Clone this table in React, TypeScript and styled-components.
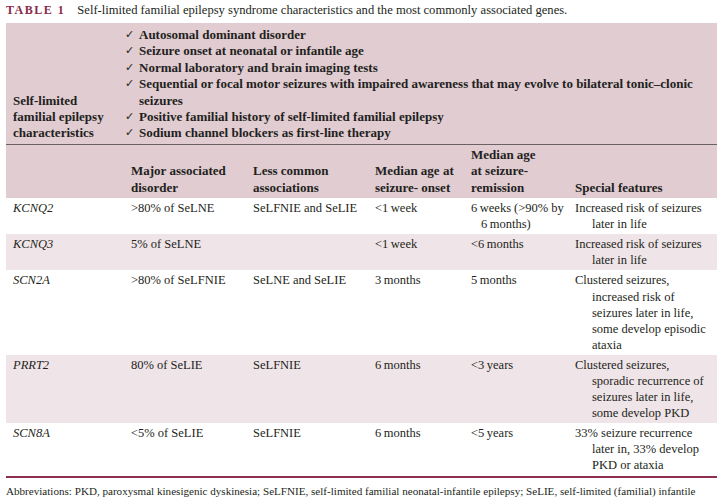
import React from "react";
import styled, { createGlobalStyle } from "styled-components";

const Global = createGlobalStyle`
  html, body { margin: 0; padding: 0; background: #ffffff; }
  body { font-family: "Liberation Serif", "Times New Roman", serif; color: #231f20; }
`;

const Page = styled.div`
  padding: 0 8px 0 6px;
  width: 711px;
`;

const Caption = styled.div`
  display: flex;
  align-items: baseline;
  gap: 12px;
  padding-top: 3px;
  height: 20px;
  font-size: 12.6px;
  line-height: 15px;
`;

const CaptionLabel = styled.span`
  font-weight: bold;
  font-size: 12px;
  letter-spacing: 1.5px;
  color: #8a2a4a;
`;

const Table = styled.table`
  width: 711px;
  border-collapse: collapse;
  table-layout: fixed;
  border-bottom: 2px solid #8d2f4f;
`;

const Col = styled.col<{ $w: number }>`
  width: ${(p) => p.$w}px;
`;

const HeadRow = styled.tr<{ $divider?: boolean }>`
  background: #e0ccd1;
  ${(p) => (p.$divider ? "border-top: 1px solid #6b6163;" : "")}
`;

const Th = styled.th<{ $top?: number; $bottom?: number; $left?: number }>`
  text-align: left;
  vertical-align: bottom;
  font-weight: bold;
  font-size: 13px;
  line-height: 16.4px;
  padding: ${(p) => p.$top ?? 2}px 6px ${(p) => p.$bottom ?? 2}px ${(p) => p.$left ?? 7}px;
  color: #231f20;
`;

const CheckList = styled.ul`
  list-style: none;
  margin: 0;
  padding: 0;
`;

const CheckItem = styled.li`
  display: flex;
  gap: 4px;
`;

const Tick = styled.span`
  flex: none;
  width: 10px;
  font-family: "DejaVu Sans", sans-serif;
  font-weight: bold;
  font-size: 11px;
`;

const BodyRow = styled.tr<{ $shade?: boolean }>`
  background: ${(p) => (p.$shade ? "#efe4e7" : "#ffffff")};
`;

const Td = styled.td<{ $hang?: number }>`
  vertical-align: top;
  font-size: 12.5px;
  line-height: 16.1px;
  padding: 2px 4px 2px ${(p) => 7 + (p.$hang ?? 0)}px;
  text-indent: ${(p) => -(p.$hang ?? 0)}px;
  color: #231f20;
`;

const Gene = styled.span`
  font-style: italic;
`;

const Footnote = styled.div`
  font-size: 11.1px;
  line-height: 16px;
  padding-top: 5px;
  white-space: nowrap;
`;

const items: string[][] = [
  ["Autosomal dominant disorder"],
  ["Seizure onset at neonatal or infantile age"],
  ["Normal laboratory and brain imaging tests"],
  [
    "Sequential or focal motor seizures with impaired awareness that may evolve to bilateral tonic\u2013clonic",
    "seizures",
  ],
  ["Positive familial history of self-limited familial epilepsy"],
  ["Sodium channel blockers as first-line therapy"],
];

type Row = {
  gene: string;
  major: string;
  less: string;
  onset: string;
  remission: string[];
  features: string[];
  shade?: boolean;
};

const T = "\u2009";

const rows: Row[] = [
  {
    gene: "KCNQ2",
    major: ">80% of SeLNE",
    less: "SeLFNIE and SeLIE",
    onset: `<1${T}week`,
    remission: [`6${T}weeks (>90% by`, `6${T}months)`],
    features: ["Increased risk of seizures", "later in life"],
  },
  {
    gene: "KCNQ3",
    major: "5% of SeLNE",
    less: "",
    onset: `<1${T}week`,
    remission: [`<6${T}months`],
    features: ["Increased risk of seizures", "later in life"],
    shade: true,
  },
  {
    gene: "SCN2A",
    major: ">80% of SeLFNIE",
    less: "SeLNE and SeLIE",
    onset: `3${T}months`,
    remission: [`5${T}months`],
    features: [
      "Clustered seizures,",
      "increased risk of",
      "seizures later in life,",
      "some develop episodic",
      "ataxia",
    ],
  },
  {
    gene: "PRRT2",
    major: "80% of SeLIE",
    less: "SeLFNIE",
    onset: `6${T}months`,
    remission: [`<3${T}years`],
    features: [
      "Clustered seizures,",
      "sporadic recurrence of",
      "seizures later in life,",
      "some develop PKD",
    ],
    shade: true,
  },
  {
    gene: "SCN8A",
    major: "<5% of SeLIE",
    less: "SeLFNIE",
    onset: `6${T}months`,
    remission: [`<5${T}years`],
    features: ["33% seizure recurrence", "later in, 33% develop", "PKD or ataxia"],
  },
];

const Lines = ({ lines }: { lines: string[] }) => (
  <>
    {lines.map((l, i) => (
      <React.Fragment key={i}>
        {i > 0 && <br />}
        {l}
      </React.Fragment>
    ))}
  </>
);

export default function App() {
  return (
    <Page>
      <Global />
      <Caption>
        <CaptionLabel>TABLE 1</CaptionLabel>
        <span>
          Self-limited familial epilepsy syndrome characteristics and the most commonly associated genes.
        </span>
      </Caption>
      <Table>
        <colgroup>
          <Col $w={118} />
          <Col $w={122} />
          <Col $w={122} />
          <Col $w={96} />
          <Col $w={104} />
          <Col $w={149} />
        </colgroup>
        <thead>
          <HeadRow>
            <Th $top={4} $bottom={2}>
              <Lines lines={["Self-limited", "familial epilepsy", "characteristics"]} />
            </Th>
            <Th colSpan={5} $top={4} $bottom={2} $left={1}>
              <CheckList>
                {items.map((it, i) => (
                  <CheckItem key={i}>
                    <Tick>✓</Tick>
                    <span>
                      <Lines lines={it} />
                    </span>
                  </CheckItem>
                ))}
              </CheckList>
            </Th>
          </HeadRow>
          <HeadRow $divider>
            <Th />
            <Th>
              <Lines lines={["Major associated", "disorder"]} />
            </Th>
            <Th>
              <Lines lines={["Less common", "associations"]} />
            </Th>
            <Th>
              <Lines lines={["Median age at", "seizure- onset"]} />
            </Th>
            <Th>
              <Lines lines={["Median age", "at seizure-", "remission"]} />
            </Th>
            <Th>Special features</Th>
          </HeadRow>
        </thead>
        <tbody>
          {rows.map((r) => (
            <BodyRow key={r.gene} $shade={r.shade}>
              <Td>
                <Gene>{r.gene}</Gene>
              </Td>
              <Td>{r.major}</Td>
              <Td>{r.less}</Td>
              <Td>{r.onset}</Td>
              <Td $hang={10}>
                <Lines lines={r.remission} />
              </Td>
              <Td $hang={17}>
                <Lines lines={r.features} />
              </Td>
            </BodyRow>
          ))}
        </tbody>
      </Table>
      <Footnote>
        Abbreviations: PKD, paroxysmal kinesigenic dyskinesia; SeLFNIE, self-limited familial neonatal-infantile
        epilepsy; SeLIE, self-limited (familial) infantile
      </Footnote>
    </Page>
  );
}
